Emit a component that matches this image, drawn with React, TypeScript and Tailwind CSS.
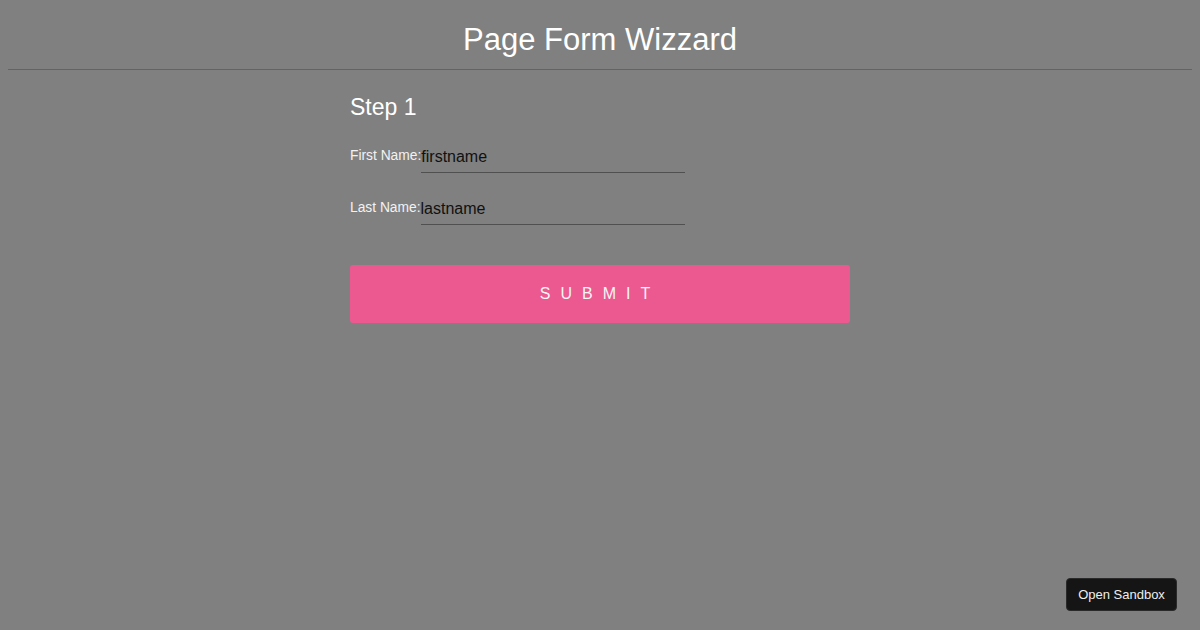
export default function App() {
  return (
    <div className="relative min-h-[630px] w-full bg-[#808080] font-['Liberation_Sans',Arial,sans-serif]">
      <header className="mx-2 border-b border-[#56657f] pt-[20px] pb-[9px]">
        <h1 className="text-center text-[31px] leading-[40px] text-white">Page Form Wizzard</h1>
      </header>

      <form className="mx-auto w-[500px] pt-[22px]" onSubmit={(e) => e.preventDefault()}>
        <h2 className="text-[23px] leading-[30px] text-white">Step 1</h2>

        <div className="mt-[24px] flex items-start">
          <label className="pt-[2px] text-[13.8px] leading-[16px] text-[#f2f2f2]">First Name:</label>
          <input
            defaultValue="firstname"
            className="h-[27px] w-[264px] border-b border-[#505050] bg-transparent pt-[1px] pb-[5px] text-[16px] leading-[18px] text-[#111] outline-none"
          />
        </div>

        <div className="mt-[25px] flex items-start">
          <label className="pt-[2px] text-[13.8px] leading-[16px] text-[#f2f2f2]">Last Name:</label>
          <input
            defaultValue="lastname"
            className="h-[27px] w-[264px] border-b border-[#505050] bg-transparent pt-[1px] pb-[5px] text-[16px] leading-[18px] text-[#111] outline-none"
          />
        </div>

        <button
          type="submit"
          className="mt-[40px] h-[58px] w-[500px] rounded-[3px] bg-[#ec5990] text-[16px] tracking-[10px] text-[#f5f5f5] uppercase"
        >
          Submit
        </button>
      </form>

      <button className="absolute right-[23px] bottom-[19px] h-[33px] w-[111px] rounded-[4px] border border-[#2a2a2a] bg-[#151515] text-[13px] text-[#eeeeee]">
        Open Sandbox
      </button>
    </div>
  )
}
